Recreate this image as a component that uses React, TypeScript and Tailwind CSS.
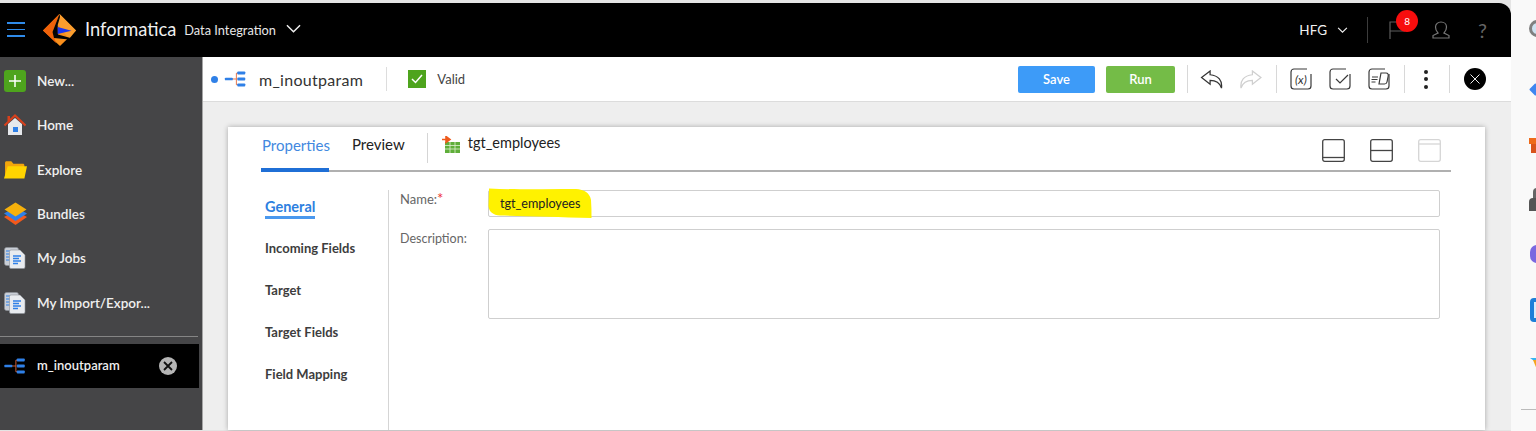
import React from "react";

const font = { fontFamily: '"Lato","Noto Sans",sans-serif' };

function MappingIcon({ className = "" }: { className?: string }) {
  return (
    <svg viewBox="0 0 24 18" className={className}>
      <path d="M8 9h5M13 2.500v13M13 2.500h2M13 15.500h2" stroke="#e0653a" strokeWidth="1" fill="none" />
      <rect x="0" y="7.500" width="9" height="3" rx="1" fill="#2f80e7" />
      <rect x="14" y="0.500" width="9" height="3.400" rx="1" fill="#2f80e7" />
      <rect x="14" y="7.300" width="9" height="3.400" rx="1" fill="#2f80e7" />
      <rect x="14" y="14" width="9" height="3.400" rx="1" fill="#2f80e7" />
    </svg>
  );
}

function Logo() {
  return (
    <svg viewBox="0 0 34 33" className="w-[34px] h-[33px]">
      <polygon points="16.500,0 0,16.500 17,32 33,16.500" fill="#f98f1c" />
      <polygon points="16.500,0 0,16.500 13,29 9.500,18" fill="#f0620a" />
      <polygon points="16.500,0 33,16.500 26,25 15,11" fill="#fb9d2e" />
      <polygon points="16.500,0 9.500,18 11,24 26,25.500 27.500,24 15,20.500 14.700,11 17,3" fill="#050505" />
      <polygon points="14.700,13 28.500,16.700 14.700,20" fill="#1c35f0" />
    </svg>
  );
}

function DocsIcon() {
  return (
    <svg viewBox="0 0 22 22" className="w-[22px] h-[22px]">
      <rect x="0.500" y="0.500" width="14" height="18" rx="2" fill="#c9ced6" stroke="#8d9299" strokeWidth="0.600" />
      <path d="M2 4h4M2 7h4M2 10h4M2 13h4" stroke="#2f80e7" strokeWidth="1.200" />
      <path d="M7 3h9l5 5v12a1.500 1.500 0 0 1-1.500 1.500H7A1.500 1.500 0 0 1 5.500 20V4.500A1.500 1.500 0 0 1 7 3z" fill="#e8ebef" stroke="#8d9299" strokeWidth="0.600" />
      <path d="M9 9h8M9 11.500h6M9 14h8M9 16.500h5" stroke="#2f80e7" strokeWidth="1.500" />
    </svg>
  );
}

function HomeIcon() {
  return (
    <svg viewBox="0 0 22 22" className="w-[22px] h-[22px]">
      <path d="M4 10l7-6 7 6v11H4z" fill="#e6e8ec" />
      <path d="M0.500 11.500L11 1.500l10.500 10" stroke="#d8401c" strokeWidth="2" fill="none" />
      <rect x="3.500" y="2" width="2.500" height="5" fill="#d8401c" />
      <rect x="9" y="13" width="5" height="5" fill="#2f80e7" />
    </svg>
  );
}

function FolderIcon() {
  return (
    <svg viewBox="0 0 22 18" className="w-[23px] h-[19px]">
      <path d="M1 17V2.500C1 1.500 1.500 1 2.500 1H7l2 2.500h9c1 0 1.500.5 1.500 1.500v2H6z" fill="#f2a60c" />
      <path d="M0 17.500L3.500 6H22l-2.500 11.500z" fill="#ffd400" />
    </svg>
  );
}

function BundleIcon() {
  return (
    <svg viewBox="0 0 23 24" className="w-[23px] h-[24px]">
      <path d="M0 15l11.500-6.500L23 15l-11.500 8z" fill="#f2591c" />
      <path d="M0 11.500L11.500 5 23 11.500 11.500 19z" fill="#2f80e7" />
      <path d="M0.500 7.500L11.500 0.500l11 7-11 7z" fill="#f6b10c" />
    </svg>
  );
}

function NavItem({ icon, label }: { icon: React.ReactNode; label: string }) {
  return (
    <div className="flex items-center h-[44.300px]">
      <div className="w-[37px] pl-[4px] flex justify-start shrink-0">{icon}</div>
      <span className="text-[13.500px] font-semibold text-[#f0f0f0] whitespace-nowrap">{label}</span>
    </div>
  );
}

function Sep({ tone = "bg-[#d8d8d8]", h = "h-[28px]" }: { tone?: string; h?: string }) {
  return <div className={`w-px ${h} ${tone} shrink-0`} />;
}

function FxBox({ children }: { children: React.ReactNode }) {
  return (
    <svg viewBox="0 0 22 22" className="w-[22px] h-[22px]" fill="none" stroke="#3a3a3a" strokeWidth="1.200">
      <path d="M17 1H4a3 3 0 0 0-3 3v14a3 3 0 0 0 3 3h14a3 3 0 0 0 3-3V6" />
      {children}
    </svg>
  );
}

function PanelIcon({ line, tone }: { line: number; tone: string }) {
  return (
    <svg viewBox="0 0 23 23" className="w-[23px] h-[23px]" fill="none" stroke={tone} strokeWidth="1.300">
      <rect x="0.700" y="0.700" width="21.600" height="21.600" rx="2" />
      <path d={`M0.700 ${line}h21.600`} />
    </svg>
  );
}

function SideLink({ label, active }: { label: string; active?: boolean }) {
  return (
    <div className="h-[42px] flex items-start">
      <span
        className={
          active
            ? "text-[14.500px] font-bold text-[#2d7fe0] border-b-[3px] border-[#4a98ee] leading-[17px] pb-[1px]"
            : "text-[13px] font-bold text-[#3d3d3d] leading-[17px]"
        }
      >
        {label}
      </span>
    </div>
  );
}

export default function App() {
  return (
    <div style={font} className="w-[1536px] h-[431px] overflow-hidden flex bg-[#f9f9f9]">
      <div className="w-[1511px] shrink-0 flex flex-col pt-[3px] pb-[1px] bg-[#e4e4e4]">
        {/* header */}
        <header className="h-[54px] shrink-0 bg-black rounded-tr-[12px] flex items-center text-white">
          <div className="w-[43px] pl-[7px] shrink-0 flex flex-col gap-[5px] -mt-[1px]">
            <div className="w-[18px] h-[1.500px] bg-[#2f8bea]" />
            <div className="w-[18px] h-[1.500px] bg-[#2f8bea]" />
            <div className="w-[18px] h-[1.500px] bg-[#2f8bea]" />
          </div>
          <Logo />
          <span className="ml-[8px] text-[18.300px] font-normal text-[#f0f0f0] leading-none -mt-[2px]">Informatica</span>
          <span className="ml-[8px] text-[12.800px] text-[#e8e8e8] leading-none">Data Integration</span>
          <svg viewBox="0 0 16 10" className="ml-[10px] w-[15px] h-[10px] -mt-[3px]" fill="none" stroke="#f0f0f0" strokeWidth="1.500">
            <path d="M1 1l7 7 7-7" />
          </svg>
          <div className="ml-auto flex items-center">
            <span className="text-[13.500px] text-[#f0f0f0]">HFG</span>
            <svg viewBox="0 0 12 8" className="ml-[10px] w-[11px] h-[7px]" fill="none" stroke="#f0f0f0" strokeWidth="1.300">
              <path d="M1 1l5 5 5-5" />
            </svg>
            <div className="ml-[19px] w-px h-[26px] bg-[#3c3c3c]" />
            <div className="relative ml-[21px] w-[16px] h-[18px]">
              <svg viewBox="0 0 16 18" className="w-[16px] h-[18px]" fill="none" stroke="#5c5c5c" strokeWidth="1.200">
                <path d="M1 18V1h14l-4 4.500 4 4.500H1" />
              </svg>
              <div className="absolute -top-[11px] left-[7px] w-[22px] h-[22px] rounded-full bg-[#f80d0d] flex items-center justify-center text-[10px] text-white">8</div>
            </div>
            <svg viewBox="0 0 18 18" className="ml-[27px] w-[18px] h-[18px]" fill="none" stroke="#777" strokeWidth="1.200">
              <path d="M1 17v-2.500l5-2.500c-1.500-1.500-2.500-3-2.500-6C3.500 3 6 1 9 1s5.500 2 5.500 5c0 3-1 4.500-2.500 6l5 2.500V17z" />
            </svg>
            <span className="ml-[28px] mr-[24px] text-[20px] leading-none text-[#666]">?</span>
          </div>
        </header>

        <div className="flex-1 flex min-h-0">
          {/* sidebar */}
          <aside className="w-[203px] shrink-0 bg-[#454547] border-r border-[#a5a5a5] flex flex-col pt-[2px]">
            <NavItem
              label="New..."
              icon={
                <div className="w-[22px] h-[22px] rounded-[3px] bg-[#4ea41d] flex items-center justify-center">
                  <svg viewBox="0 0 12 12" className="w-[12px] h-[12px]" stroke="#fff" strokeWidth="1.500">
                    <path d="M6 0v12M0 6h12" />
                  </svg>
                </div>
              }
            />
            <NavItem label="Home" icon={<HomeIcon />} />
            <NavItem label="Explore" icon={<FolderIcon />} />
            <NavItem label="Bundles" icon={<BundleIcon />} />
            <NavItem label="My Jobs" icon={<DocsIcon />} />
            <NavItem label="My Import/Expor..." icon={<DocsIcon />} />
            <div className="mt-[11px] mr-[4px] h-px bg-[#858585]" />
            <div className="mt-[7px] mr-[3px] h-[44px] bg-black flex items-center">
              <div className="w-[37px] pl-[4px] shrink-0">
                <MappingIcon className="w-[22px] h-[16px]" />
              </div>
              <span className="text-[13px] font-semibold text-[#eeeeee]">m_inoutparam</span>
              <div className="ml-auto mr-[22px] w-[18px] h-[18px] rounded-full bg-[#b5b5b5] flex items-center justify-center">
                <svg viewBox="0 0 10 10" className="w-[10px] h-[10px]" stroke="#111" strokeWidth="1.800">
                  <path d="M1 1l8 8M9 1l-8 8" />
                </svg>
              </div>
            </div>
          </aside>

          {/* main */}
          <main className="flex-1 min-w-0 flex flex-col bg-[#eeeeee]">
            <div className="h-[45px] shrink-0 bg-white border-b border-[#dcdcdc] flex items-center">
              <div className="ml-[8px] w-[7px] h-[7px] rounded-full bg-[#2f80e7]" />
              <MappingIcon className="ml-[6px] w-[23px] h-[16px]" />
              <span className="ml-[12px] mt-[1px] text-[16px] text-[#333] tracking-[0.3px]">m_inoutparam</span>
              <div className="ml-[23px]"><Sep tone="bg-[#dddddd]" h="h-[24px]" /></div>
              <div className="ml-[21px] w-[18px] h-[18px] bg-[#4ea41d] flex items-center justify-center">
                <svg viewBox="0 0 12 10" className="w-[12px] h-[10px]" fill="none" stroke="#fff" strokeWidth="1.500">
                  <path d="M1 5l3.500 3.500L11 1" />
                </svg>
              </div>
              <span className="ml-[11px] mt-[1px] text-[13px] text-[#444]">Valid</span>

              <div className="ml-auto flex items-center mr-[25px]">
                <div className="w-[77px] h-[27px] rounded-[2px] bg-[#3d9bf8] flex items-center justify-center text-[13px] font-semibold text-white pt-[1px]">Save</div>
                <div className="ml-[11px] w-[69px] h-[27px] rounded-[2px] bg-[#74bc47] flex items-center justify-center text-[13px] font-semibold text-white pt-[1px]">Run</div>
                <div className="ml-[12px]"><Sep /></div>
                <svg viewBox="0 0 24 20" className="ml-[12px] w-[24px] h-[19px]" fill="none" stroke="#333" strokeWidth="1.300">
                  <path d="M10 1L1 8l9 7v-4c6 0 10 2 12 8 1-8-3-13-12-14z" />
                </svg>
                <svg viewBox="0 0 24 20" className="ml-[15px] w-[23px] h-[19px]" fill="none" stroke="#cfcfcf" strokeWidth="1.300">
                  <path d="M14 1l9 7-9 7v-4c-6 0-10 2-12 8-1-8 3-13 12-14z" />
                </svg>
                <div className="ml-[14px]"><Sep /></div>
                <div className="ml-[13px]">
                  <FxBox>
                    <text x="5" y="16" fontSize="12" fontStyle="italic" fill="#333" stroke="none">(x)</text>
                  </FxBox>
                </div>
                <div className="ml-[17px]">
                  <FxBox>
                    <path d="M7 11l4 4 8-8" />
                  </FxBox>
                </div>
                <div className="ml-[17px]">
                  <FxBox>
                    <path d="M4 9h6M3.500 11.500h6M3.500 14h4M13 5h5c2 0 2.500 1.500 2.200 3l-1.200 6c-.3 1.500-1.200 2-2.500 2H11z" />
                  </FxBox>
                </div>
                <div className="ml-[14px]"><Sep /></div>
                <div className="ml-[19px] flex flex-col gap-[3.500px]">
                  <div className="w-[4px] h-[4px] rounded-full bg-[#222]" />
                  <div className="w-[4px] h-[4px] rounded-full bg-[#222]" />
                  <div className="w-[4px] h-[4px] rounded-full bg-[#222]" />
                </div>
                <div className="ml-[21px]"><Sep /></div>
                <div className="ml-[14px] w-[22px] h-[22px] rounded-full bg-black flex items-center justify-center">
                  <svg viewBox="0 0 10 10" className="w-[10px] h-[10px]" stroke="#eee" strokeWidth="1">
                    <path d="M0.500 0.500l9 9M9.500 0.500l-9 9" />
                  </svg>
                </div>
              </div>
            </div>

            {/* card */}
            <div className="flex-1 min-h-0 pt-[25px] pl-[25px] pr-[26px]">
              <div className="h-full bg-white shadow-[0_0_5px_rgba(0,0,0,0.3)] pl-[33px] pr-[34px] flex flex-col">
                {/* tabs */}
                <div className="h-[45px] shrink-0 border-b-2 border-[#b0b0b0] flex items-start">
                  <div className="h-[45px] border-b-[4px] border-[#1f6fd6] pt-[6px] w-[68px]">
                    <span className="ml-[1px] text-[15px] text-[#4288e0] whitespace-nowrap">Properties</span>
                  </div>
                  <span className="ml-[23px] mt-[6px] text-[15px] text-[#222]">Preview</span>
                  <div className="ml-[22px] mt-[6px]"><Sep tone="bg-[#d5d5d5]" h="h-[30px]" /></div>
                  <svg viewBox="0 0 18 18" className="ml-[14px] mt-[9px] w-[18px] h-[18px]">
                    <rect x="3" y="6" width="15" height="11" fill="#5fae3a" />
                    <path d="M3 9.500h15M3 13h15M8 6v11M13 6v11" stroke="#dff0d2" strokeWidth="0.800" />
                    <path d="M0 3.500h6M4 0.500l4 3-4 3z" stroke="#ee5a1c" strokeWidth="1.600" fill="#ee5a1c" />
                  </svg>
                  <span className="ml-[8px] mt-[5px] text-[14.500px] text-[#222]">tgt_employees</span>
                  <div className="ml-auto mt-[12px] flex gap-[25px] pr-[10px]">
                    <PanelIcon line={18.500} tone="#444" />
                    <PanelIcon line={11.500} tone="#444" />
                    <PanelIcon line={5} tone="#d5d5d5" />
                  </div>
                </div>

                {/* body */}
                <div className="flex-1 min-h-0 flex pt-[18px]">
                  <nav className="w-[128px] shrink-0 pl-[4px] pt-[8px] border-r border-[#d5d5d5]">
                    <SideLink label="General" active />
                    <SideLink label="Incoming Fields" />
                    <SideLink label="Target" />
                    <SideLink label="Target Fields" />
                    <SideLink label="Field Mapping" />
                  </nav>
                  <div className="flex-1 min-w-0 pl-[11px] pr-[11px]">
                    <div className="flex items-start">
                      <label className="-mt-[1px] w-[88px] shrink-0 text-[13px] text-[#666] leading-[18px]">
                        Name:<span className="text-[#e33] text-[15px]">*</span>
                      </label>
                      <div className="relative flex-1 h-[27px] border border-[#cfcfcf] rounded-[2px] flex items-center pl-[11px] text-[12.600px] text-[#222]">
                        <svg viewBox="0 0 105 31" className="absolute -left-[1px] -top-[3px] w-[105px] h-[31px]">
                          <path d="M1 0.500C30 2 60 0.500 88 1c8 .5 14 4 15 11 .5 6 .5 12 .5 18C70 29 35 28 12 27.500 5 27 1 24 .5 18z" fill="#fff200" />
                        </svg>
                        <span className="relative pt-[1px]">tgt_employees</span>
                      </div>
                    </div>
                    <div className="flex items-start mt-[13px]">
                      <label className="w-[88px] shrink-0 text-[12.500px] text-[#666] leading-[18px]">Description:</label>
                      <div className="-mt-[1px] flex-1 h-[90px] border border-[#cfcfcf] rounded-[2px]" />
                    </div>
                  </div>
                </div>
              </div>
            </div>
          </main>
        </div>
      </div>

      {/* cropped browser rail */}
      <div className="flex-1 min-w-0 overflow-hidden flex flex-col items-start pl-[18px] pt-[20px]">
        <div className="w-[17px] h-[17px] shrink-0 rounded-full border-[3px] border-[#808080] bg-[#cfe3f2]" />
        <div className="mt-[48px] ml-[2px] w-[9px] h-[9px] shrink-0 rotate-45 rounded-[1px] bg-[#3f86f0]" />
        <div className="mt-[44px] w-[14px] h-[15px] shrink-0 flex flex-col">
          <div className="h-[6px] w-[14px] bg-[#ee6a1a]" />
          <div className="ml-[2px] h-[9px] w-[12px] bg-[#d8531c]" />
        </div>
        <div className="mt-[35px] w-[14px] h-[23px] shrink-0 flex flex-col items-start">
          <div className="ml-[4px] w-[8px] h-[10px] rounded-t-[4px] bg-[#666]" />
          <div className="w-[14px] h-[13px] rounded-t-[4px] bg-[#555]" />
        </div>
        <div className="mt-[34px] ml-[1px] w-[14px] h-[18px] shrink-0 rounded-l-[7px] bg-[#7a68e0]" />
        <div className="mt-[35px] ml-[1px] w-[14px] h-[24px] shrink-0 rounded-[4px] border-[4px] border-[#1d7fd8] bg-[#d7ecfb]" />
        <svg viewBox="0 0 14 14" className="mt-[36px] ml-[1px] w-[14px] h-[14px] shrink-0">
          <polygon points="0,0 14,0 7,5" fill="#35b4f2" />
          <polygon points="3,2 14,2 14,14 8,14" fill="#f5a51c" />
        </svg>
        <div className="mt-[37px] -ml-[8px] w-[20px] h-px shrink-0 bg-[#bbbbbb]" />
      </div>
    </div>
  );
}
